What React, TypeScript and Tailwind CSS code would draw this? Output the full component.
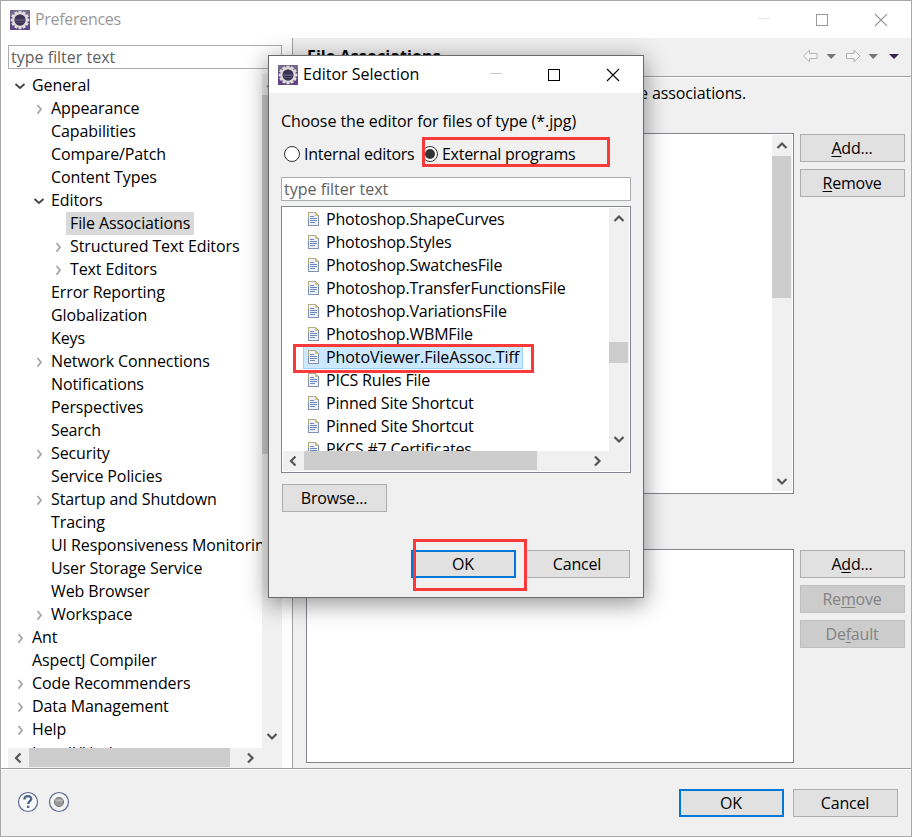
import React from "react";

type Node = { label: string; level: 0 | 1 | 2; state?: "open" | "closed"; selected?: boolean };

const tree: Node[] = [
  { label: "General", level: 0, state: "open" },
  { label: "Appearance", level: 1, state: "closed" },
  { label: "Capabilities", level: 1 },
  { label: "Compare/Patch", level: 1 },
  { label: "Content Types", level: 1 },
  { label: "Editors", level: 1, state: "open" },
  { label: "File Associations", level: 2, selected: true },
  { label: "Structured Text Editors", level: 2, state: "closed" },
  { label: "Text Editors", level: 2, state: "closed" },
  { label: "Error Reporting", level: 1 },
  { label: "Globalization", level: 1 },
  { label: "Keys", level: 1 },
  { label: "Network Connections", level: 1, state: "closed" },
  { label: "Notifications", level: 1 },
  { label: "Perspectives", level: 1 },
  { label: "Search", level: 1 },
  { label: "Security", level: 1, state: "closed" },
  { label: "Service Policies", level: 1 },
  { label: "Startup and Shutdown", level: 1, state: "closed" },
  { label: "Tracing", level: 1 },
  { label: "UI Responsiveness Monitoring", level: 1 },
  { label: "User Storage Service", level: 1 },
  { label: "Web Browser", level: 1 },
  { label: "Workspace", level: 1, state: "closed" },
  { label: "Ant", level: 0, state: "closed" },
  { label: "AspectJ Compiler", level: 0 },
  { label: "Code Recommenders", level: 0, state: "closed" },
  { label: "Data Management", level: 0, state: "closed" },
  { label: "Help", level: 0, state: "closed" },
];

const programs = [
  "Photoshop.ShapeCurves",
  "Photoshop.Styles",
  "Photoshop.SwatchesFile",
  "Photoshop.TransferFunctionsFile",
  "Photoshop.VariationsFile",
  "Photoshop.WBMFile",
  "PhotoViewer.FileAssoc.Tiff",
  "PICS Rules File",
  "Pinned Site Shortcut",
  "Pinned Site Shortcut",
  "PKCS #7 Certificates",
];

const indents = { 0: "pl-[4px]", 1: "pl-[23px]", 2: "pl-[42px]" };

function EclipseIcon() {
  const teeth = Array.from({ length: 12 }, (_, i) => i * 30);
  return (
    <svg width="20" height="20" viewBox="0 0 20 20" className="shrink-0">
      <rect width="20" height="20" fill="#5d4587" />
      <rect width="20" height="7" fill="#75688f" />
      {teeth.map((a) => (
        <rect key={a} x="8.5" y="0.7" width="3" height="3.5" fill="#e2dfdb" transform={`rotate(${a} 10 10)`} />
      ))}
      <circle cx="10" cy="10" r="6.6" fill="#4a3b63" stroke="#dedad7" strokeWidth="2.2" />
      <circle cx="10" cy="10" r="5.4" fill="#3b3454" />
      <path d="M5 9.5h10v1.2H5z" fill="#6c6690" />
      <path d="M5.6 12.5h8.8" stroke="#544c74" />
    </svg>
  );
}

function DocIcon() {
  return (
    <svg width="11" height="14" viewBox="0 0 11 14" className="mr-px shrink-0" shapeRendering="crispEdges">
      <path d="M.5 .5H7.5L10.5 3.5V13.5H.5Z" fill="#eef3fb" stroke="#8292b5" />
      <path d="M.5 6V.5H7.5L10.5 3.5" fill="none" stroke="#b4ab82" />
      <path d="M7 1V4H10Z" fill="#e0c070" />
      <path d="M2 4.5H6M2 6.5H9M2 8.5H9M2 10.5H7" stroke="#6b87bb" />
    </svg>
  );
}

const chevrons = {
  up: "M1.5 8 6 3.5 10.5 8",
  down: "M1.5 3 6 7.5 10.5 3",
  left: "M7.5 1.5 3 6 7.5 10.5",
  right: "M4 1.5 8.5 6 4 10.5",
};

function Chevron({ dir }: { dir: keyof typeof chevrons }) {
  return (
    <svg width="12" height="12" viewBox="0 0 12 12" className="shrink-0">
      <path d={chevrons[dir]} fill="none" stroke="#555" strokeWidth="2.2" />
    </svg>
  );
}

function VScroll({ before, thumb, end }: { before: string; thumb: string; end: string }) {
  return (
    <div className="flex w-5 shrink-0 flex-col items-center bg-[#f0f0f0]">
      <div className="flex h-[21px] w-full shrink-0 items-center pl-[3.5px]"><Chevron dir="up" /></div>
      <div className={`shrink-0 ${before}`} />
      <div className={`-ml-px w-[19px] shrink-0 bg-[#cdcdcd] ${thumb}`} />
      <div className="grow" />
      <div className={`flex h-[23px] w-full shrink-0 items-start pl-[3.5px] ${end}`}><Chevron dir="down" /></div>
    </div>
  );
}

function HScroll({ thumb, end }: { thumb: string; end: string }) {
  return (
    <div className="flex h-5 shrink-0 items-center bg-[#f0f0f0]">
      <div className="flex w-[21px] items-center justify-center pb-px"><Chevron dir="left" /></div>
      <div className={`-mt-px h-[19px] bg-[#cdcdcd] ${thumb}`} />
      <div className="grow" />
      <div className={`flex pb-px ${end}`}><Chevron dir="right" /></div>
    </div>
  );
}

function Button({ children, primary, disabled }: { children: React.ReactNode; primary?: boolean; disabled?: boolean }) {
  const look = primary
    ? "border-2 border-[#0078d7] bg-[#e1e1e1]"
    : disabled
      ? "border border-[#bfbfbf] bg-[#cccccc] text-[#838383]"
      : "border border-[#adadad] bg-[#e1e1e1]";
  return <button className={`flex h-7 w-[105px] shrink-0 items-center justify-center pr-px tracking-[-0.2px] ${look}`}>{children}</button>;
}

function U({ children }: { children: string }) {
  return <span className="underline decoration-1 underline-offset-2">{children}</span>;
}

function WindowControls({ tone, dim }: { tone: string; dim: string }) {
  return (
    <svg width="132" height="14" viewBox="0 0 132 14" className="shrink-0" fill="none" shapeRendering="crispEdges">
      <path d="M1 5.5H13" stroke={dim} />
      <rect x="59.5" y="1.5" width="11" height="11" stroke={tone} />
      <path d="M118 1 130 13M130 1 118 13" stroke={tone} shapeRendering="auto" strokeWidth="1.1" />
    </svg>
  );
}

function Toolbar() {
  return (
    <svg width="98" height="14" viewBox="0 0 98 14" fill="none" className="shrink-0">
      <path d="M1.5 7 7.5 1.2V4.5H15V9.5H7.5V12.8Z" stroke="#b3b3b3" fill="#f6f6f6" />
      <path d="M24.5 5H34L29.2 10Z" fill="#77777b" />
      <path d="M58 7 52 1.2V4.5H44.5V9.5H52V12.8Z" stroke="#b3b3b3" fill="#f6f6f6" />
      <path d="M66.5 5H76L71.2 10Z" fill="#77777b" />
      <path d="M87 5H97L92 10Z" fill="#39204f" />
    </svg>
  );
}

function Filter() {
  return <div className="flex h-6 shrink-0 items-center border border-[#abadb3] bg-white pl-[2px] tracking-normal text-[#606060]">type filter text</div>;
}

function TreeRow({ node }: { node: Node }) {
  return (
    <div className={`flex h-[23px] shrink-0 items-center whitespace-nowrap ${indents[node.level]}`}>
      <svg width="16" height="12" viewBox="0 0 16 12" fill="none" className="mt-px shrink-0">
        {node.state === "open" && <path d="M3.5 4 8 8 12.5 4" stroke="#444" strokeWidth="1.8" />}
        {node.state === "closed" && <path d="M6.5 2 10 6.3 6.5 10.6" stroke="#a6a6a6" strokeWidth="1.8" />}
      </svg>
      <span className={`flex h-[23px] items-center px-1 pb-px ${node.selected ? "bg-[#d9d9d9]" : ""}`}>{node.label}</span>
    </div>
  );
}

function Radio({ checked, label }: { checked?: boolean; label: string }) {
  return (
    <div className="flex items-center">
      <span className="flex size-4 items-center justify-center rounded-full border border-[#333] bg-white">
        {checked && <span className="size-[10px] rounded-full bg-[#333]" />}
      </span>
      <span className="pl-1">{label}</span>
    </div>
  );
}

function EditorDialog() {
  return (
    <div className="absolute left-[268px] top-[55px] flex h-[543px] w-[376px] flex-col border border-[#6a6a6a] bg-[#f0f0f0] shadow-[0_5px_22px_1px_rgba(0,0,0,0.42)]">
      <div className="flex h-[37px] shrink-0 items-center bg-white pl-[9px]">
        <EclipseIcon />
        <span className="grow pb-px pl-[5px] tracking-normal">Editor Selection</span>
        <WindowControls tone="#000" dim="#c8c8c8" />
        <div className="w-[22px]" />
      </div>
      <div className="flex grow flex-col px-3">
        <div className="mt-4 flex h-[23px] shrink-0 items-center tracking-[-0.07px]">Choose the editor for files of type (*.jpg)</div>
        <div className="mt-[11px] flex h-[22px] items-center pl-[3px] tracking-[-0.27px]">
          <div className="w-[138px]"><Radio label="Internal editors" /></div>
          <Radio checked label="External programs" />
        </div>
        <div className="mt-3 flex flex-col"><Filter /></div>
        <div className="mt-[5px] flex h-[267px] shrink-0 flex-col border border-[#828790] bg-white p-px">
          <div className="flex h-[243px] shrink-0">
            <div className="flex grow flex-col overflow-hidden">
              {programs.map((name, i) => (
                <div key={i} className="flex h-[23px] shrink-0 items-center pl-[20px]">
                  <div className={`flex h-[23px] items-center border pb-px pl-1 pr-[3px] ${i === 6 ? "border-[#99d1ff] bg-[#cce8ff]" : "border-transparent"}`}>
                    <DocIcon />
                    <span className={i === 6 ? "pl-[6px] tracking-[-0.07px]" : "pl-[6px] tracking-[-0.2px]"}>{name}</span>
                  </div>
                </div>
              ))}
            </div>
            <VScroll before="h-[113px]" thumb="h-[21px]" end="pt-[6px]" />
          </div>
          <HScroll thumb="w-[233px]" end="pr-[26px]" />
        </div>
        <div className="mt-[11px] flex pl-px"><Button>Browse...</Button></div>
        <div className="mt-[38px] flex justify-end gap-[9px] pr-px">
          <Button primary>OK</Button>
          <Button>Cancel</Button>
        </div>
      </div>
      <div className="absolute left-[153px] top-[81px] h-[30px] w-[188px] border-3 border-[#fa3a3a]" />
      <div className="absolute left-[24px] top-[288px] h-[29px] w-[241px] border-3 border-[#fa3a3a]" />
      <div className="absolute left-[144px] top-[483px] h-[52px] w-[114px] border-3 border-[#fa3a3a]" />
    </div>
  );
}

export default function App() {
  return (
    <div className="relative flex h-[837px] w-[912px] flex-col overflow-hidden border border-[#a8a8a8] bg-[#f0f0f0] font-['Open_Sans',sans-serif] text-[16px] leading-[22px] tracking-[-0.1px] text-black">
      <div className="flex h-[37px] shrink-0 items-center bg-white pl-[9px]">
        <EclipseIcon />
        <span className="grow pb-px pl-[5px] tracking-[-0.3px] text-[#999]">Preferences</span>
        <WindowControls tone="#999" dim="#e6e6e6" />
        <div className="w-[22px]" />
      </div>

      <div className="flex h-[730px] shrink-0">
        <div className="flex w-[291px] shrink-0 flex-col bg-white pl-[7px] pr-[10px] pt-[7px]">
          <Filter />
          <div className="mt-[5px] flex h-[674px] shrink-0">
            <div className="flex w-[254px] flex-col overflow-hidden">
              {tree.map((n) => <TreeRow key={n.label} node={n} />)}
              <div className="mt-px flex flex-col"><TreeRow node={{ label: "Install/Update", level: 0 }} /></div>
            </div>
            <VScroll before="h-0" thumb="h-[359px]" end="pt-[6px]" />
          </div>
          <HScroll thumb="w-[201px]" end="pr-[26px]" />
        </div>

        <div className="flex grow flex-col border-l border-[#a0a0a0]">
          <div className="flex h-[38px] shrink-0 items-center justify-between pb-[2px] pl-[14px] pr-[11px]">
            <span className="font-bold tracking-[0.1px]">File Associations</span>
            <Toolbar />
          </div>
          <div className="h-[2px] shrink-0 border-t border-b border-t-[#a0a0a0] border-b-white" />
          <div className="mt-1 flex h-[23px] w-[453px] shrink-0 items-center justify-end whitespace-nowrap pb-[2px]">
            See 'Content Types' for content-type based file associations.
          </div>
          <div className="flex h-[29px] shrink-0 items-end pl-[13px]">File types:</div>
          <div className="mt-[-1px] flex gap-[6px] pl-[13px]">
            <div className="flex h-[361px] w-[488px] justify-end border border-[#828790] bg-white p-px pb-[2px]">
              <VScroll before="h-0" thumb="h-[142px]" end="pt-[8px]" />
            </div>
            <div className="flex flex-col gap-[7px] pt-px">
              <Button><span><U>A</U>dd...</span></Button>
              <Button><span><U>R</U>emove</span></Button>
            </div>
          </div>
          <div className="flex h-[55px] shrink-0 items-end pl-[13px]">Associated editors:</div>
          <div className="flex gap-[6px] pl-[13px]">
            <div className="h-[214px] w-[488px] border border-[#828790] bg-white" />
            <div className="flex flex-col gap-[7px] pt-px">
              <Button><span>A<U>d</U>d...</span></Button>
              <Button disabled><span>Re<U>m</U>ove</span></Button>
              <Button disabled><span>De<U>f</U>ault</span></Button>
            </div>
          </div>
        </div>
      </div>

      <div className="flex grow items-center border-t border-[#a0a0a0]">
        <div className="flex h-full grow items-center border-t border-white pl-4 pr-[13px]">
          <svg width="22" height="22" viewBox="0 0 22 22" fill="none" className="-mt-[3px] mr-[9px]">
            <circle cx="11" cy="11" r="9.5" fill="#f7f8fa" stroke="#5c6b8b" strokeWidth="1.2" />
            <path d="M7.4 8.6C7.4 4 14.6 4.2 14.3 8 14.1 10.2 11.2 10.3 11.2 13M11.2 14.8V17" stroke="#4f6187" strokeWidth="2.3" />
          </svg>
          <svg width="22" height="22" viewBox="0 0 22 22" fill="none" className="-mt-[3px]">
            <circle cx="11" cy="11" r="9.5" fill="#f4f4f4" stroke="#5c6b8b" strokeWidth="1.2" />
            <circle cx="11" cy="11" r="4.6" fill="#999" stroke="#777" />
            <path d="M7.5 9.5H14.5" stroke="#b8b8b8" strokeWidth="2" />
          </svg>
          <div className="grow" />
          <div className="flex gap-[9px]">
            <Button primary>OK</Button>
            <Button>Cancel</Button>
          </div>
        </div>
      </div>

      <div className="absolute -left-px -top-px"><EditorDialog /></div>
    </div>
  );
}
